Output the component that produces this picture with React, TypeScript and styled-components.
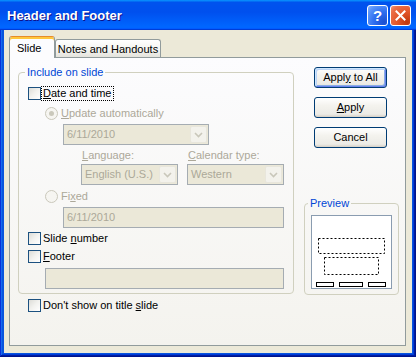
import React from 'react';
import styled, { createGlobalStyle } from 'styled-components';

const Global = createGlobalStyle`
  html, body { margin: 0; padding: 0; background: #ffffff; }
  body { font-family: "Liberation Sans", Arial, sans-serif; font-size: 11px; color: #000; }
  * { box-sizing: border-box; }
`;

const Window = styled.div`
  width: 416px;
  height: 357px;
  display: flex;
  flex-direction: column;
  overflow: hidden;
  background: #0855dd;
  box-shadow: inset -1px -1px #00138c, inset 1px 1px #0831d9, inset -2px -2px #001ea0,
    inset 2px 2px #166aee, inset -3px -3px #003bda, inset 3px 3px #0855dd;
`;

const TitleBar = styled.div`
  height: 30px;
  flex: none;
  display: flex;
  align-items: center;
  gap: 2px;
  padding: 0 5px 0 7px;
  background: linear-gradient(180deg, #0997ff, #0053ee 8%, #0050ee 40%, #06f 88%, #06f 93%, #005bff 95%, #003dd7 96%, #003dd7);
`;

const Title = styled.div`
  flex: 1;
  color: #ffffff;
  font: bold 13px "Liberation Sans", Arial, sans-serif;
  text-shadow: 1px 1px #0f1089;
`;

const CaptionButton = styled.div<{ $kind: 'help' | 'close' }>`
  width: 21px;
  height: 21px;
  border: 1px solid #ffffff;
  border-radius: 3px;
  display: flex;
  align-items: center;
  justify-content: center;
  color: #ffffff;
  font: bold 15px "Liberation Sans", Arial, sans-serif;
  background: ${p =>
    p.$kind === 'help'
      ? 'radial-gradient(circle at 85% 85%, #1a4fd0 0%, #2e6ef0 45%, #5a95fa 80%, #8cb6ff 100%)'
      : 'radial-gradient(circle at 85% 85%, #c0380c 0%, #e2562a 45%, #ea6f48 80%, #f39a7c 100%)'};
`;

const Frame = styled.div`
  flex: 1;
  display: flex;
  padding: 0 4px 4px 4px;
`;

const Client = styled.div`
  flex: 1;
  display: flex;
  flex-direction: column;
  background: #ece9d8;
  padding: 6px 6px 7px 5px;
`;

const TabStrip = styled.div`
  display: flex;
  align-items: flex-end;
  height: 21px;
  flex: none;
`;

const Tab = styled.div<{ $active?: boolean; $w: number }>`
  width: ${p => p.$w}px;
  display: flex;
  align-items: center;
  justify-content: ${p => (p.$active ? 'flex-start' : 'center')};
  padding-left: ${p => (p.$active ? 7 : 0)}px;
  border: 1px solid #919b9c;
  border-bottom: none;
  border-radius: 3px 3px 0 0;
  ${p =>
    p.$active
      ? `
    height: 22px;
    margin-bottom: -1px;
    position: relative;
    z-index: 1;
    background: #fcfcfe;
    border-top: 1px solid #e68b2c;
    box-shadow: inset 0 2px #ffc73c;
    padding-top: 1px;
  `
      : `
    height: 18px;
    background: linear-gradient(180deg, #ffffff 0%, #f3f3ef 60%, #e4e3dc 100%);
  `}
`;

const Panel = styled.div`
  flex: 1;
  display: flex;
  border: 1px solid #919b9c;
  background: linear-gradient(180deg, #fcfcfe 0%, #f4f3ee 100%);
`;

const LeftColumn = styled.div`
  display: flex;
  flex-direction: column;
  padding: 0 0 0 8px;
  width: 284px;
`;

const Group = styled.fieldset<{ $mt: number; $w: number; $pad: string }>`
  margin: ${p => p.$mt}px 0 0 0;
  width: ${p => p.$w}px;
  min-inline-size: 0;
  border: 1px solid #d0d0bf;
  border-radius: 4px;
  padding: ${p => p.$pad};
  display: flex;
  flex-direction: column;
`;

const Legend = styled.legend`
  color: #0046d5;
  line-height: 13px;
  padding: 0 2px;
  margin-left: -3px;
`;

const Row = styled.div<{ $mt?: number; $indent?: number; $h?: number }>`
  display: flex;
  align-items: center;
  height: ${p => p.$h ?? 13}px;
  margin-top: ${p => p.$mt ?? 0}px;
  margin-left: ${p => p.$indent ?? 0}px;
  flex: none;
`;

const Check = styled.span`
  width: 13px;
  height: 13px;
  flex: none;
  border: 1px solid #1c5180;
  background: linear-gradient(135deg, #dcdcd7 0%, #f2f2ef 50%, #ffffff 100%);
`;

const Radio = styled.span<{ $checked?: boolean }>`
  width: 13px;
  height: 13px;
  flex: none;
  border-radius: 50%;
  border: 1px solid #cac8bb;
  background: #f6f5f1;
  display: flex;
  align-items: center;
  justify-content: center;
  &::after {
    content: "";
    width: 5px;
    height: 5px;
    border-radius: 50%;
    background: ${p => (p.$checked ? '#cac8bb' : 'transparent')};
  }
`;

const Label = styled.span<{ $disabled?: boolean; $focus?: boolean; $gap?: number; $w?: number }>`
  color: ${p => (p.$disabled ? '#aca899' : '#000000')};
  line-height: 13px;
  margin-left: ${p => p.$gap ?? 1}px;
  padding: 0 1px;
  white-space: nowrap;
  ${p => (p.$w ? `width: ${p.$w}px;` : '')}
  ${p => (p.$focus ? 'outline: 1px dotted #000; outline-offset: 0px;' : '')}
`;

const Field = styled.div<{ $w: number }>`
  width: ${p => p.$w}px;
  height: 21px;
  border: 1px solid #a5acb2;
  background: #ebe8d8;
  display: flex;
  align-items: center;
  padding: 1px;
  color: #aca899;
`;

const FieldText = styled.span`
  flex: 1;
  padding-left: 2px;
  line-height: 13px;
`;

const DropButton = styled.span`
  width: 17px;
  height: 17px;
  flex: none;
  border-radius: 2px;
  border: 1px solid #e8e6dc;
  background: #f3f2ec;
  display: flex;
  align-items: center;
  justify-content: center;
`;

const RightColumn = styled.div`
  display: flex;
  flex-direction: column;
  margin-left: 10px;
  width: 95px;
`;

const Button = styled.div<{ $default?: boolean; $mt: number }>`
  width: 73px;
  height: 21px;
  margin: ${p => p.$mt}px 0 0 10px;
  border: 1px solid #003c74;
  border-radius: 3px;
  display: flex;
  align-items: center;
  justify-content: center;
  background: linear-gradient(180deg, #ffffff 0%, #f4f3ee 40%, #ecebe6 85%, #d6d0c5 100%);
  line-height: 13px;
  white-space: pre;
  ${p => (p.$default ? 'box-shadow: inset 1px 1px #cee7ff, inset -1px -1px #6982ee, inset 2px 2px #bcd4f6, inset -2px -2px #89ade4;' : '')}
`;

const ButtonText = styled.span`
  white-space: pre;
`;

const PreviewBox = styled.div`
  width: 81px;
  height: 74px;
  flex: none;
`;

const Chevron = () => (
  <svg width="9" height="6" viewBox="0 0 9 6">
    <path d="M1 1 L4.5 4.5 L8 1" fill="none" stroke="#c9c7ba" strokeWidth="1.6" />
  </svg>
);

const Combo = ({ w, text }: { w: number; text: string }) => (
  <Field $w={w}>
    <FieldText>{text}</FieldText>
    <DropButton>
      <Chevron />
    </DropButton>
  </Field>
);

const PreviewDrawing = () => (
  <svg width="81" height="74" viewBox="0 0 81 74">
    <rect x="0.5" y="0.5" width="80" height="73" fill="#ffffff" stroke="#8a9cb0" />
    <rect x="7.5" y="23.5" width="66" height="15" fill="none" stroke="#000" strokeDasharray="2 2" />
    <rect x="13.5" y="42.5" width="54" height="17" fill="none" stroke="#000" strokeDasharray="2 2" />
    <rect x="5.5" y="67.5" width="17" height="4" fill="#fff" stroke="#000" />
    <rect x="28.5" y="67.5" width="23" height="4" fill="#fff" stroke="#000" />
    <rect x="57.5" y="67.5" width="17" height="4" fill="#fff" stroke="#000" />
  </svg>
);

export default function App() {
  return (
    <>
      <Global />
      <Window>
        <TitleBar>
          <Title>Header and Footer</Title>
          <CaptionButton $kind="help">?</CaptionButton>
          <CaptionButton $kind="close">
            <svg width="11" height="11" viewBox="0 0 11 11">
              <path d="M1.5 1.5 L9.5 9.5 M9.5 1.5 L1.5 9.5" stroke="#fff" strokeWidth="2" strokeLinecap="square" />
            </svg>
          </CaptionButton>
        </TitleBar>
        <Frame>
          <Client>
            <TabStrip>
              <Tab $active $w={46}>Slide</Tab>
              <Tab $w={106}>Notes and Handouts</Tab>
            </TabStrip>
            <Panel>
              <LeftColumn>
                <Group $mt={8} $w={276} $pad="8px 0 4px 9px">
                  <Legend>Include on slide</Legend>
                  <Row>
                    <Check />
                    <Label $focus><u>D</u>ate and time</Label>
                  </Row>
                  <Row $mt={7} $indent={17}>
                    <Radio $checked />
                    <Label $disabled $gap={2}><u>U</u>pdate automatically</Label>
                  </Row>
                  <Row $mt={4} $indent={35} $h={21}>
                    <Combo w={146} text="6/11/2010" />
                  </Row>
                  <Row $mt={4} $indent={53}>
                    <Label $disabled $gap={0} $w={106}><u>L</u>anguage:</Label>
                    <Label $disabled $gap={0}><u>C</u>alendar type:</Label>
                  </Row>
                  <Row $mt={2} $indent={53} $h={21}>
                    <Combo w={97} text="English (U.S.)" />
                    <span style={{ width: 9 }} />
                    <Combo w={97} text="Western" />
                  </Row>
                  <Row $mt={5} $indent={17}>
                    <Radio />
                    <Label $disabled $gap={2}>Fi<u>x</u>ed</Label>
                  </Row>
                  <Row $mt={4} $indent={35} $h={21}>
                    <Field $w={221}>
                      <FieldText>6/11/2010</FieldText>
                    </Field>
                  </Row>
                  <Row $mt={4}>
                    <Check />
                    <Label>Slide <u>n</u>umber</Label>
                  </Row>
                  <Row $mt={5}>
                    <Check />
                    <Label><u>F</u>ooter</Label>
                  </Row>
                  <Row $mt={5} $indent={17} $h={21}>
                    <Field $w={239} />
                  </Row>
                </Group>
                <Row $mt={5} $indent={10}>
                  <Check />
                  <Label>Don't show on title <u>s</u>lide</Label>
                </Row>
              </LeftColumn>
              <RightColumn>
                <Button $default $mt={9}>
                  <ButtonText>Appl<u>y</u> to All</ButtonText>
                </Button>
                <Button $mt={9}>
                  <ButtonText><u>A</u>pply</ButtonText>
                </Button>
                <Button $mt={9}>
                  <ButtonText>Cancel</ButtonText>
                </Button>
                <Group $mt={49} $w={95} $pad="5px 6px 5px 6px">
                  <Legend>Preview</Legend>
                  <PreviewBox>
                    <PreviewDrawing />
                  </PreviewBox>
                </Group>
              </RightColumn>
            </Panel>
          </Client>
        </Frame>
      </Window>
    </>
  );
}
